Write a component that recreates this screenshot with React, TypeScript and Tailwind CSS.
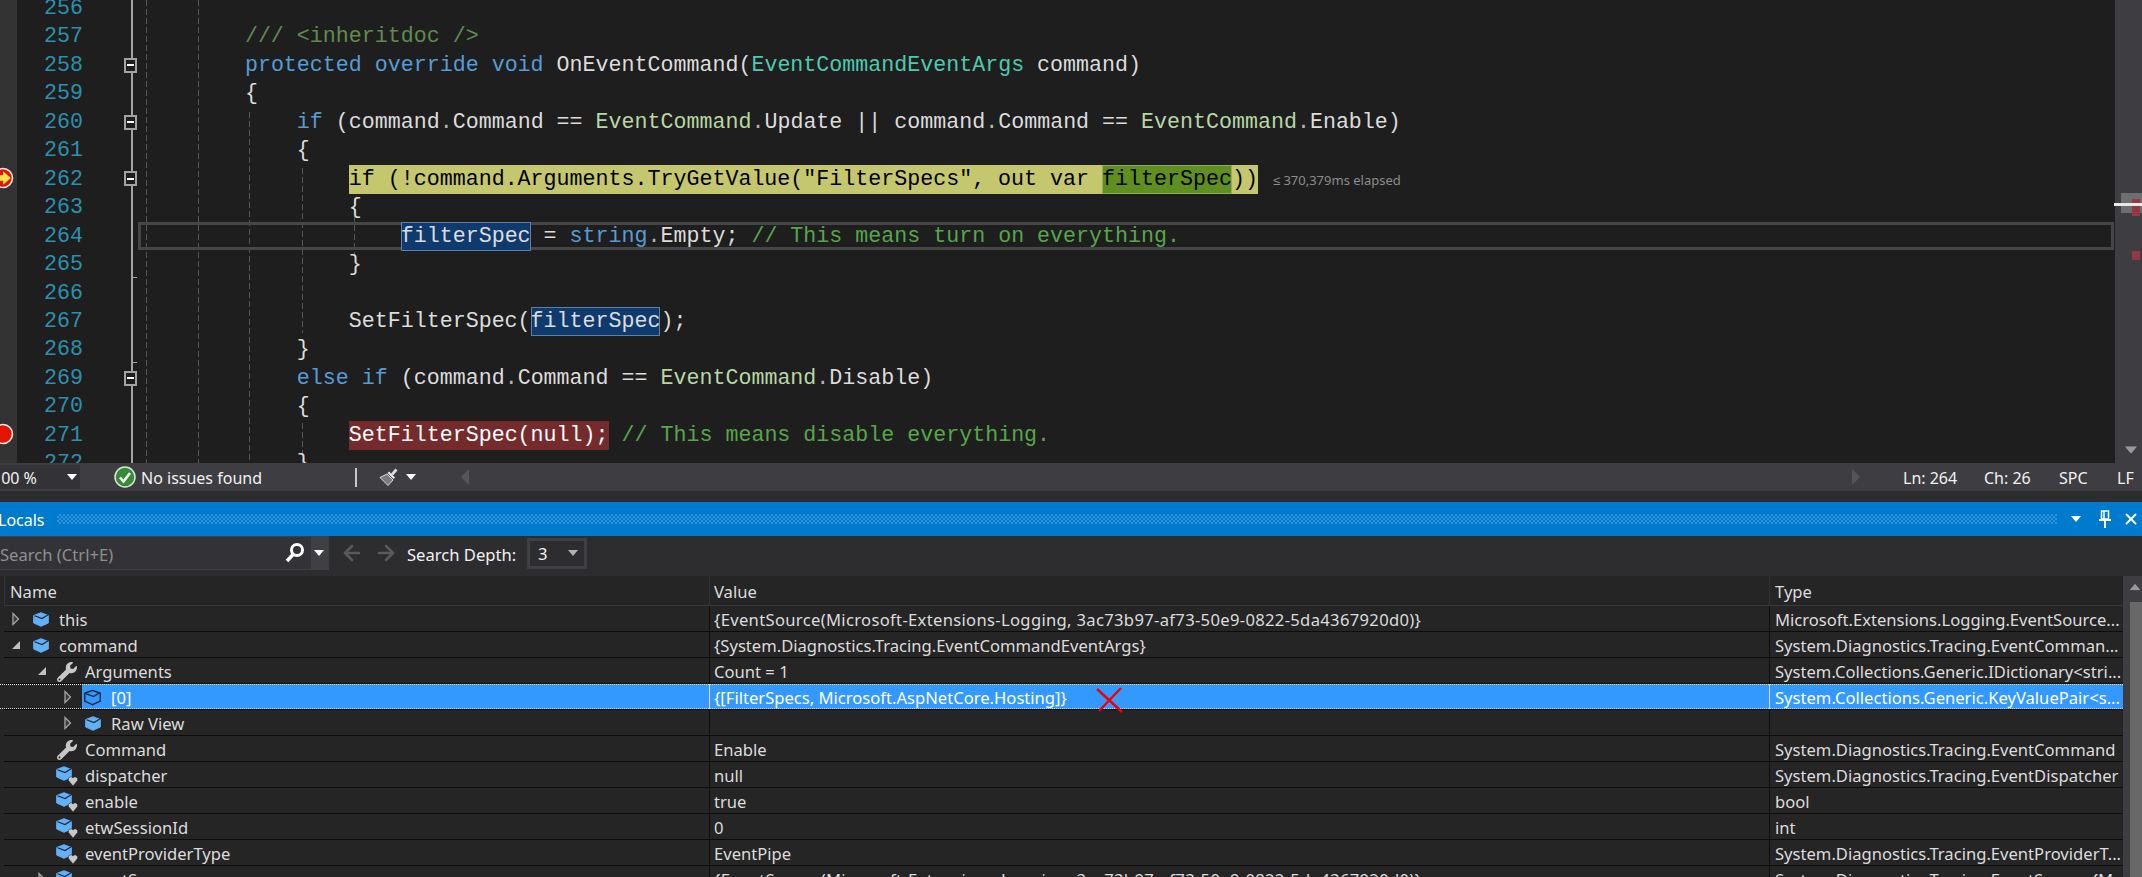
import React from "react";
import { ArrowLeft, ArrowRight, X } from "lucide-react";
import { FaWrench } from "react-icons/fa";

const K = ({ children }: { children: React.ReactNode }) => <span className="text-[#569cd6]">{children}</span>;
const T = ({ children }: { children: React.ReactNode }) => <span className="text-[#4ec9b0]">{children}</span>;
const E = ({ children }: { children: React.ReactNode }) => <span className="text-[#b8d7a3]">{children}</span>;
const C = ({ children }: { children: React.ReactNode }) => <span className="text-[#57a64a]">{children}</span>;
const D = () => <span className="text-[#b4b4b4]">.</span>;
const Ref = ({ children = "filterSpec" }: { children?: React.ReactNode }) => (
  <span className="inline-block align-top h-[29px] bg-[#0f3a6e] shadow-[inset_0_0_0_1px_#5d80a8]">{children}</span>
);

type Line = { n: number; fold?: boolean; glyph?: "current" | "break"; code: React.ReactNode };

const lines: Line[] = [
  { n: 256, code: "" },
  { n: 257, code: <span className="text-[#608b4e]">{"        /// <inheritdoc />"}</span> },
  { n: 258, fold: true, code: <>{"        "}<K>protected override void</K>{" OnEventCommand("}<T>EventCommandEventArgs</T>{" command)"}</> },
  { n: 259, code: "        {" },
  { n: 260, fold: true, code: <>{"            "}<K>if</K>{" (command"}<D />{"Command == "}<E>EventCommand</E><D />{"Update || command"}<D />{"Command == "}<E>EventCommand</E><D />{"Enable)"}</> },
  { n: 261, code: "            {" },
  {
    n: 262,
    fold: true,
    glyph: "current",
    code: (
      <>
        {"                "}
        <span className="inline-block align-top h-[29px] bg-[#c5c76f] text-black">
          {'if (!command.Arguments.TryGetValue("FilterSpecs", out var '}
          <span className="inline-block align-top h-[29px] bg-[#5f8f1e] shadow-[inset_0_0_0_1px_#8fac66]">filterSpec</span>
          {"))"}
        </span>
        <span className="inline-block align-top ml-[15px] text-[13px] text-[#8c8c8c] font-['Noto_Sans',sans-serif]">≤ 370,379ms elapsed</span>
      </>
    ),
  },
  { n: 263, code: "                {" },
  { n: 264, code: <>{"                    "}<Ref />{" = "}<K>string</K><D />{"Empty; "}<C>// This means turn on everything.</C></> },
  { n: 265, code: "                }" },
  { n: 266, code: "" },
  { n: 267, code: <>{"                SetFilterSpec("}<Ref />{");"}</> },
  { n: 268, code: "            }" },
  { n: 269, fold: true, code: <>{"            "}<K>else if</K>{" (command"}<D />{"Command == "}<E>EventCommand</E><D />{"Disable)"}</> },
  { n: 270, code: "            {" },
  {
    n: 271,
    glyph: "break",
    code: (
      <>
        {"                "}
        <span className="inline-block align-top h-[29px] bg-[#752a2c] text-white">SetFilterSpec(null);</span>
        {" "}
        <C>// This means disable everything.</C>
      </>
    ),
  },
  { n: 272, code: "            }" },
];

const guide = "absolute w-px bg-[repeating-linear-gradient(to_bottom,#555555_0,#555555_6px,transparent_6px,transparent_9px)]";

const Tri = ({ className = "" }: { className?: string }) => (
  <svg width="10" height="6" viewBox="0 0 10 6" className={className}>
    <path d="M0 0H10L5 6Z" fill="currentColor" />
  </svg>
);

function Glyph({ kind }: { kind: "current" | "break" }) {
  return (
    <svg width="22" height="22" viewBox="0 0 22 22" className="absolute -left-[8px] top-[2px]">
      <circle cx="11" cy="11" r="9.5" fill="#e51400" stroke="#f0f0f0" strokeWidth="1.5" />
      {kind === "current" && <path d="M3 8h8V4l8 7-8 7v-4H3Z" fill="#ffe04d" stroke="#7a5a00" strokeWidth="0.5" />}
    </svg>
  );
}

function Editor() {
  return (
    <div className="flex h-[463px] bg-[#1e1e1e]">
      <div className="relative flex-1 overflow-hidden">
        <div className="absolute left-0 top-0 bottom-0 w-[17px] bg-[#333333]" />
        <div className="absolute left-[131px] top-0 bottom-0 w-[2px] bg-[#a3a3a3]" />
        <div className="absolute left-[131px] top-[277px] w-[6px] h-px bg-[#a3a3a3]" />
        <div className="absolute left-[131px] top-[362px] w-[6px] h-px bg-[#a3a3a3]" />
        <div className={guide + " left-[146px] top-0 bottom-0"} />
        <div className={guide + " left-[198px] top-0 bottom-0"} />
        <div className={guide + " left-[249px] top-[112px] bottom-0"} />
        <div className={guide + " left-[302px] top-[168px] h-[165px]"} />
        <div className={guide + " left-[302px] top-[423px] bottom-0"} />
        <div className={guide + " left-[354px] top-[198px] h-[56px]"} />
        <div className="absolute left-[138px] top-[222px] right-[1px] h-[28px] border-[3px] border-[#464646]" />
        <div className="relative -mt-[6px] font-['Liberation_Mono',monospace] text-[21.65px] text-[#dcdcdc]">
          {lines.map((l) => (
            <div key={l.n} className="flex h-[28.46px] leading-[30.4px] whitespace-pre">
              <div className="relative w-[17px] shrink-0">{l.glyph && <Glyph kind={l.glyph} />}</div>
              <div className="w-[107px] shrink-0 pl-[27px] text-[#2b91af]">{l.n}</div>
              <div className="w-[13px] shrink-0 flex items-center">
                {l.fold && (
                  <div className="relative w-[13px] h-[15px] border-2 border-[#a3a3a3] bg-[#1e1e1e] flex items-center justify-center">
                    <div className="w-[7px] h-[2px] bg-white" />
                  </div>
                )}
              </div>
              <div className="pl-[4px]">{l.code}</div>
            </div>
          ))}
        </div>
      </div>
      <div className="relative w-[27px] bg-[#3e3e42]">
        <div className="absolute left-[6px] right-0 top-[193px] h-[20px] bg-[#6e6e6e]" />
        <div className="absolute left-[17px] w-[8px] top-[199px] h-[17px] bg-[#913a45]" />
        <div className="absolute left-[17px] w-[8px] top-[251px] h-[9px] bg-[#913a45]" />
        <div className="absolute -left-[1px] right-0 top-[203px] h-[3px] bg-[#e8e8e8]" />
        <Tri className="absolute left-[11px] top-[447px] text-[#999999] scale-125" />
      </div>
    </div>
  );
}

function StatusBar() {
  return (
    <div className="flex items-center h-[28px] bg-[#3e3e42] text-[#f1f1f1] text-[16px]">
      <div className="flex items-center w-[80px] h-[24px] bg-[#333337] overflow-hidden shrink-0">
        <span className="-ml-[8px] w-[75px] shrink-0 pt-[2px]">100 %</span>
        <Tri className="text-white" />
      </div>
      <svg width="22" height="22" viewBox="0 0 22 22" className="ml-[34px]">
        <circle cx="11" cy="11" r="10" fill="#368a38" stroke="#d8e8d8" strokeWidth="1.5" />
        <path d="M6 11.5l3.5 4L16 7" fill="none" stroke="#fff" strokeWidth="2.6" />
      </svg>
      <span className="ml-[5px] w-[214px] pt-[2px]">No issues found</span>
      <div className="w-[2px] h-[19px] bg-[#c8c8c8]" />
      <svg width="20" height="18" viewBox="0 0 20 18" className="ml-[21px]">
        <path d="M17.5 0.5L19.5 2.5L15 7.5L13 5.5Z" fill="#dcdcdc" />
        <path d="M11 3.5L17 9.5L15.5 11L9.5 5Z" fill="#ececec" />
        <path d="M9 6L15 12L10 17.5L2 9.5Z" fill="#7c7c7c" stroke="#dcdcdc" strokeWidth="1" />
      </svg>
      <Tri className="ml-[8px] text-white" />
      <svg width="8" height="16" viewBox="0 0 8 16" className="ml-[45px]"><path d="M8 0V16L0 8Z" fill="#55555a" /></svg>
      <svg width="8" height="16" viewBox="0 0 8 16" className="ml-[1383px]"><path d="M0 0V16L8 8Z" fill="#55555a" /></svg>
      <span className="ml-[43px] w-[81px] pt-[1px]">Ln: 264</span>
      <span className="w-[75px] pt-[1px]">Ch: 26</span>
      <span className="w-[58px] pt-[1px]">SPC</span>
      <span className="pt-[1px]">LF</span>
    </div>
  );
}

function TitleBar() {
  return (
    <div className="flex items-center h-[34px] bg-[#007acc] text-white text-[16px]">
      <span className="-ml-[2px] w-[59px] shrink-0 pt-[2px]">Locals</span>
      <div className="w-[2000px] h-[10px] bg-[conic-gradient(#2f93d6_25%,transparent_0_50%,#2f93d6_0_75%,transparent_0)] bg-[length:4px_4px]" />
      <Tri className="ml-[14px] text-white" />
      <svg width="12" height="18" viewBox="0 0 12 18" className="ml-[18px]">
        <path d="M2.5 1h7v8h-7Z M5 1v8" fill="none" stroke="#fff" strokeWidth="1.5" />
        <path d="M0 10h12M6 10v8" stroke="#fff" strokeWidth="2" />
      </svg>
      <X size={18} strokeWidth={2.5} className="ml-[11px]" />
    </div>
  );
}

function Toolbar() {
  return (
    <div className="flex items-center h-[40px] pb-[6px] bg-[#2d2d30] text-[#f1f1f1] text-[16.6px]">
      <div className="flex items-center w-[329px] h-[34px] bg-[#3f3f46]">
        <div className="flex items-center justify-between w-[311px] h-[32px] bg-[#333337] pr-[6px]">
          <span className="text-[#8f8f8f] pt-[4px]">Search (Ctrl+E)</span>
          <svg width="20" height="22" viewBox="0 0 20 22">
            <circle cx="12" cy="8" r="5.5" fill="none" stroke="#fff" strokeWidth="3" />
            <path d="M8 12.5L2 19" stroke="#fff" strokeWidth="3.5" />
          </svg>
        </div>
        <Tri className="ml-[3px] text-white" />
      </div>
      <ArrowLeft size={24} strokeWidth={2.5} className="ml-[11px] text-[#5a5a5a]" />
      <ArrowRight size={24} strokeWidth={2.5} className="ml-[10px] text-[#5a5a5a]" />
      <span className="ml-[9px] w-[120px] pt-[4px]">Search Depth:</span>
      <div className="flex items-center justify-between w-[60px] h-[31px] border-[3px] border-[#3f3f46] pl-[8px] pr-[6px]">
        <span className="pt-[3px]">3</span>
        <Tri className="text-[#b0b0b0]" />
      </div>
    </div>
  );
}

type Kind = "cube" | "wrench" | "field" | "selected";
type RowData = { level: 0 | 1 | 2; arrow?: "open" | "closed"; icon: Kind; name: string; value: string; type: string; selected?: boolean; wide?: boolean };

const rows: RowData[] = [
  { level: 0, arrow: "closed", icon: "cube", name: "this", wide: true, value: "{EventSource(Microsoft-Extensions-Logging, 3ac73b97-af73-50e9-0822-5da4367920d0)}", type: "Microsoft.Extensions.Logging.EventSource..." },
  { level: 0, arrow: "open", icon: "cube", name: "command", value: "{System.Diagnostics.Tracing.EventCommandEventArgs}", type: "System.Diagnostics.Tracing.EventComman..." },
  { level: 1, arrow: "open", icon: "wrench", name: "Arguments", value: "Count = 1", type: "System.Collections.Generic.IDictionary<stri..." },
  { level: 2, arrow: "closed", icon: "selected", name: "[0]", value: "{[FilterSpecs, Microsoft.AspNetCore.Hosting]}", type: "System.Collections.Generic.KeyValuePair<s...", selected: true },
  { level: 2, arrow: "closed", icon: "cube", name: "Raw View", value: "", type: "" },
  { level: 1, icon: "wrench", name: "Command", value: "Enable", type: "System.Diagnostics.Tracing.EventCommand" },
  { level: 1, icon: "field", name: "dispatcher", value: "null", type: "System.Diagnostics.Tracing.EventDispatcher" },
  { level: 1, icon: "field", name: "enable", value: "true", type: "bool" },
  { level: 1, icon: "field", name: "etwSessionId", value: "0", type: "int" },
  { level: 1, icon: "field", name: "eventProviderType", value: "EventPipe", type: "System.Diagnostics.Tracing.EventProviderT..." },
  { level: 1, arrow: "closed", icon: "field", name: "eventSource", wide: true, value: "{EventSource(Microsoft-Extensions-Logging, 3ac73b97-af73-50e9-0822-5da4367920d0)}", type: "System.Diagnostics.Tracing.EventSource {M..." },
];

const levelPad = { 0: "pl-[5px]", 1: "pl-[31px]", 2: "pl-[57px]" };

function Cube({ selected }: { selected?: boolean }) {
  return (
    <svg width={selected ? 17 : 16} height={selected ? 17 : 15} viewBox="0 0 16 15">
      <path d="M8 0.7L15.3 3.5V11L8 14.3L0.7 11V3.5Z" fill={selected ? "#3399ff" : "#62b0f5"} stroke={selected ? "#10233a" : "#62b0f5"} strokeWidth={selected ? 1.3 : 1} strokeLinejoin="round" />
      <path d="M1.5 3.8L9 6.5L14.8 3" fill="none" stroke="#1d2a38" strokeWidth="1.2" />
    </svg>
  );
}

function RowIcon({ kind }: { kind: Kind }) {
  if (kind === "wrench") return <FaWrench size={20} className="text-[#c8c8c8]" />;
  if (kind === "field")
    return (
      <span className="relative block w-[22px] h-[20px]">
        <span className="absolute left-0 top-0"><Cube /></span>
        <svg width="10" height="10" viewBox="0 0 11 11" className="absolute left-[12px] top-[10px]">
          <path d="M5.5 11L0.5 5V2.5L2.5 1H4L5.5 2.2 7 1H8.5L10.5 2.5V5Z" fill="#c8c8c8" stroke="#252526" strokeWidth="0.6" />
        </svg>
      </span>
    );
  return <Cube selected={kind === "selected"} />;
}

function Arrow({ state }: { state?: "open" | "closed" }) {
  if (state === "closed")
    return (
      <svg width="8" height="14" viewBox="0 0 8 14">
        <path d="M1 1.5L6.5 7 1 12.5Z" fill="#3a3a3a" stroke="#a5a5a5" strokeWidth="1.3" />
      </svg>
    );
  if (state === "open")
    return (
      <svg width="10" height="10" viewBox="0 0 10 10">
        <path d="M9 1V9H1Z" fill="#c0c0c0" />
      </svg>
    );
  return null;
}

function Locals() {
  return (
    <div className="flex flex-1 min-h-0 bg-[#252526]">
      <div className="flex-1 min-w-0 overflow-hidden text-[#dcdcdc] text-[16.6px]">
        <div className="flex h-[30px] ml-[4px] border-b border-[#3a3a3d]">
          <div className="w-[705px] pl-[5px] leading-[31px] border-l border-[#333337]">Name</div>
          <div className="w-[1060px] pl-[4px] leading-[31px] border-l border-[#333337]">Value</div>
          <div className="pl-[5px] leading-[31px] border-l border-[#333337]">Type</div>
        </div>
        {rows.map((r) => (
          <div key={r.name} className={"relative flex h-[26px] ml-[4px] border-b border-[#0d0d0d] " + (r.selected ? "text-white" : "")}>
            {r.selected && <div className="absolute left-[78px] right-0 top-0 bottom-0 bg-[#3399ff]" />}
            {r.selected && <div className="absolute -left-[4px] right-0 top-0 border-t border-dotted border-[#e8e8e8]" />}
            {r.selected && <div className="absolute -left-[4px] right-0 bottom-0 border-t border-dotted border-[#d0d0d0]" />}
            <div className={"relative flex items-center w-[705px] shrink-0 " + levelPad[r.level]}>
              <div className="w-[14px] flex justify-center shrink-0"><Arrow state={r.arrow} /></div>
              <div className="w-[34px] flex justify-center shrink-0 pl-[1px] pt-[2px]"><RowIcon kind={r.icon} /></div>
              <span className="ml-[2px] pt-[4px]">{r.name}</span>
            </div>
            <div className={"relative flex items-center w-[1060px] shrink-0 pl-[4px] border-l " + (r.selected ? "border-[#dcdcdc]" : "border-[#0d0d0d]")}>
              <span className={"pt-[4px] " + (r.wide ? "tracking-[0.32px]" : "")}>{r.value}</span>
              {r.selected && (
                <svg width="28" height="26" viewBox="0 0 28 26" className="absolute left-[386px] top-[3px] overflow-visible">
                  <path d="M1 2l25 23M25 1L3 24" stroke="#f00000" strokeWidth="2.4" fill="none" />
                </svg>
              )}
            </div>
            <div className={"relative flex items-center pl-[5px] whitespace-nowrap border-l " + (r.selected ? "border-[#dcdcdc]" : "border-[#0d0d0d]")}>
              <span className="pt-[4px]">{r.type}</span>
            </div>
          </div>
        ))}
      </div>
      <div className="relative w-[19px] shrink-0 bg-[#3e3e42]">
        <Tri className="absolute left-[7px] top-[8px] rotate-180 text-[#999999] scale-110" />
        <div className="absolute left-[7px] right-0 top-[26px] bottom-0 bg-[#686868]" />
      </div>
    </div>
  );
}

export default function App() {
  return (
    <div className="flex flex-col w-[2142px] h-[877px] overflow-hidden bg-[#2d2d30] font-['Noto_Sans',sans-serif]">
      <Editor />
      <StatusBar />
      <div className="h-[11px] bg-[#2d2d30]" />
      <TitleBar />
      <Toolbar />
      <Locals />
    </div>
  );
}
